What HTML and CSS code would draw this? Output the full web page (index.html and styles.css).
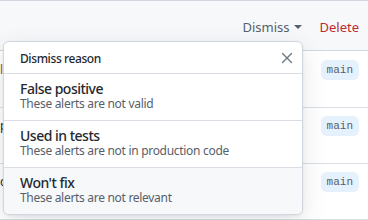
FILE: index.html
```html
<!DOCTYPE html>
<html lang="en">
<head>
<meta charset="utf-8">
<title>Dismiss alerts</title>
<link rel="stylesheet" href="styles.css">
</head>
<body>
<div class="box">
  <div class="box-header">
    <div class="actions">
      <span class="dismiss">Dismiss<span class="caret"></span></span>
      <span class="delete">Delete</span>
    </div>
  </div>
  <ul class="rows">
    <li class="row">
      <span class="row-title"><span class="frag frag-orange">l</span></span>
      <span class="branch">main</span>
    </li>
    <li class="row">
      <span class="row-title"><span class="frag">p</span></span>
      <span class="branch">main</span>
    </li>
    <li class="row">
      <span class="row-title"><span class="frag">c</span></span>
      <span class="branch">main</span>
    </li>
  </ul>

  <div class="menu">
    <div class="menu-header">
      <span class="menu-title">Dismiss reason</span>
      <svg class="close" width="16" height="16" viewBox="0 0 16 16" aria-hidden="true">
        <path d="M3.5 3.5 L12.5 12.5 M12.5 3.5 L3.5 12.5" stroke="#6e7781" stroke-width="1.4" stroke-linecap="round" fill="none"/>
      </svg>
    </div>
    <div class="menu-item">
      <div class="item-title">False positive</div>
      <div class="item-desc">These alerts are not valid</div>
    </div>
    <div class="menu-item">
      <div class="item-title">Used in tests</div>
      <div class="item-desc">These alerts are not in production code</div>
    </div>
    <div class="menu-item is-hover">
      <div class="item-title">Won't fix</div>
      <div class="item-desc">These alerts are not relevant</div>
    </div>
  </div>
</div>
</body>
</html>
```

FILE: styles.css
```css
* { box-sizing: border-box; }

html, body {
  margin: 0;
  padding: 0;
  background: #ffffff;
}

body {
  width: 368px;
  height: 220px;
  overflow: hidden;
  font-family: "Noto Sans", sans-serif;
  color: #24292f;
}

.box {
  position: relative;
  border-top: 1px solid #d0d7de;
}

.box-header {
  height: 50px;
  background: #f6f8fa;
  border-bottom: 1px solid #d0d7de;
  display: flex;
  justify-content: flex-end;
  align-items: center;
  padding: 2px 9px 0 0;
}

.actions {
  display: flex;
  align-items: center;
  gap: 17px;
  font-size: 13px;
  line-height: 20px;
}

.dismiss {
  display: flex;
  align-items: center;
  color: #57606a;
}

.caret {
  display: inline-block;
  width: 0;
  height: 0;
  margin-left: 5px;
  margin-top: 1px;
  border-style: solid;
  border-width: 4px 4px 0 4px;
  border-color: #57606a transparent transparent transparent;
}

.delete {
  color: #bf2a2f;
}

.rows {
  list-style: none;
  margin: 0;
  padding: 0;
}

.row {
  display: flex;
  align-items: flex-start;
  height: 56px;
  padding-top: 8px;
  border-bottom: 1px solid #d8dee4;
}

.row:first-child {
  height: 57px;
  padding-top: 9px;
}

.row-title {
  flex: 1;
  overflow: hidden;
  white-space: nowrap;
  font-size: 12px;
  line-height: 20px;
  color: #24292f;
}

.frag {
  display: inline-block;
}

.frag-orange {
  color: #bc4c00;
}

.branch {
  margin-right: 9px;
  padding: 0 6px;
  height: 20px;
  line-height: 20px;
  border-radius: 6px;
  background: #e5f1fd;
  color: #57606a;
  font-family: "Liberation Mono", monospace;
  font-size: 11px;
}

.menu {
  position: absolute;
  left: 3px;
  top: 40px;
  width: 300px;
  height: 174px;
  background: #ffffff;
  border: 1px solid #d0d7de;
  border-radius: 6px;
  overflow: hidden;
  box-shadow: 0 1px 3px rgba(31, 35, 40, 0.08), 0 8px 24px rgba(66, 74, 83, 0.14);
}

.menu-header {
  height: 32px;
  display: flex;
  align-items: center;
  justify-content: space-between;
  padding: 0 7px 0 16px;
  border-bottom: 1px solid #d8dee4;
}

.menu-title {
  padding-top: 3px;
  font-size: 12px;
  line-height: 18px;
  font-weight: 500;
  letter-spacing: -0.4px;
  color: #24292f;
}

.close {
  display: block;
}

.menu-item {
  height: 47px;
  padding: 8px 16px 0 16px;
  border-bottom: 1px solid #d8dee4;
}

.menu-item:last-child {
  height: 46px;
  border-bottom: 0;
}

.menu-item.is-hover {
  background: #f6f8fa;
}

.item-title {
  font-size: 14px;
  line-height: 14px;
  font-weight: 500;
  letter-spacing: -0.5px;
  color: #24292f;
}

.item-desc {
  font-size: 12px;
  line-height: 16px;
  letter-spacing: -0.3px;
  color: #57606a;
}
```
